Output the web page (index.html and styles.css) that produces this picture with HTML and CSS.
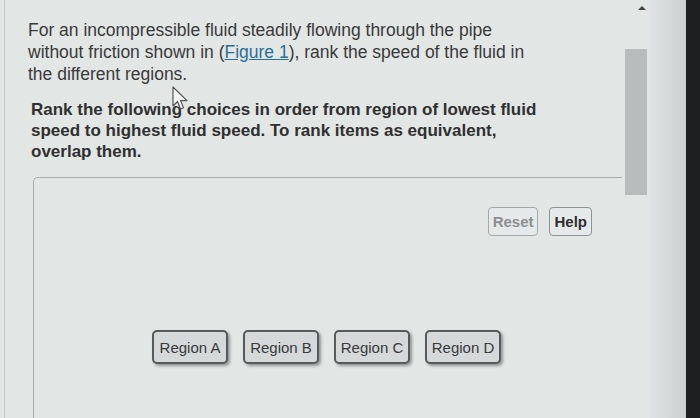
FILE: index.html
```html
<!DOCTYPE html>
<html>
<head>
<meta charset="utf-8">
<link rel="stylesheet" href="styles.css">
</head>
<body>
<div class="screen">
  <div class="content">
    <p class="intro">For an incompressible fluid steadily flowing through the pipe without friction shown in (<a class="fig" href="#">Figure 1</a>), rank the speed of the fluid in the different regions.</p>
    <p class="instructions">Rank the following choices in order from region of lowest fluid speed to highest fluid speed. To rank items as equivalent, overlap them.</p>
    <div class="rank-box">
      <div class="tools">
        <button class="tool reset">Reset</button>
        <button class="tool help">Help</button>
      </div>
      <div class="items">
        <div class="item">Region A</div>
        <div class="item">Region B</div>
        <div class="item">Region C</div>
        <div class="item">Region D</div>
      </div>
    </div>
    <svg class="cursor" width="20" height="26" viewBox="0 0 20 26">
      <path d="M2 1 L2 20 L6.5 15.5 L9.5 23 L12.5 21.8 L9.6 14.6 L16 14.6 Z" fill="#f4f6f6" stroke="#555" stroke-width="1.2" stroke-linejoin="round"/>
    </svg>
  </div>
  <div class="scroll">
    <div class="arrow"></div>
    <div class="thumb"></div>
  </div>
  <div class="side"></div>
  <div class="bezel"></div>
</div>
</body>
</html>
```
FILE: styles.css
```css
html, body {
  margin: 0;
  padding: 0;
}
body {
  width: 700px;
  height: 418px;
  overflow: hidden;
  background: #e2e6e5;
  font-family: "Liberation Sans", Arial, sans-serif;
  color: #333;
}
.screen {
  display: flex;
  height: 418px;
}
.content {
  position: relative;
  width: 594px;
  padding: 19px 0 0 23px;
  margin-left: 4px;
  display: flex;
  flex-direction: column;
  border-left: 1px solid #c6cbca;
}
.intro {
  margin: 0;
  font-size: 17.5px;
  line-height: 22px;
  width: 500px;
  color: #3a3a3a;
}
.fig {
  color: #2a6f98;
  text-decoration: underline;
}
.instructions {
  margin: 14px 0 0 3px;
  font-size: 17px;
  font-weight: bold;
  line-height: 21px;
  width: 520px;
  color: #303030;
}
.rank-box {
  margin: 15px 0 0 5px;
  flex: 1;
  border-top: 1px solid #a9adad;
  border-left: 1px solid #a9adad;
  border-top-left-radius: 5px;
  display: flex;
  flex-direction: column;
}
.tools {
  display: flex;
  justify-content: flex-end;
  gap: 11px;
  padding: 29px 30px 0 0;
}
.tool {
  font-family: "Liberation Sans", Arial, sans-serif;
  font-size: 15px;
  font-weight: bold;
  height: 29px;
  padding: 0 4px;
  border: 1px solid #a3a8a8;
  border-radius: 4px;
  background: #e6e9e9;
}
.reset {
  color: #8c8f8f;
}
.help {
  color: #2f2f2f;
  border-color: #8e9393;
}
.items {
  display: flex;
  gap: 15px;
  margin-top: 94px;
  padding-left: 118px;
}
.item {
  width: 72px;
  height: 30px;
  border: 2px solid #555a5a;
  border-radius: 5px;
  background: #d6d9da;
  box-shadow: 2px 2px 3px rgba(0,0,0,0.35);
  font-size: 15px;
  color: #3a3a3a;
  display: flex;
  align-items: center;
  justify-content: center;
}
.cursor {
  position: absolute;
  left: 166px;
  top: 86px;
}
.scroll {
  width: 28px;
  display: flex;
  flex-direction: column;
  align-items: flex-start;
}
.arrow {
  width: 0;
  height: 0;
  margin: 6px 0 0 16px;
  border-left: 4px solid transparent;
  border-right: 4px solid transparent;
  border-bottom: 4px solid #444;
}
.thumb {
  margin: 39px 0 0 3px;
  width: 22px;
  height: 146px;
  background: #b9bcbc;
}
.side {
  width: 36px;
  background: linear-gradient(to right, #e0e3e3, #cdd0d0);
}
.bezel {
  flex: 1;
  background: #1d1f20;
}
```
